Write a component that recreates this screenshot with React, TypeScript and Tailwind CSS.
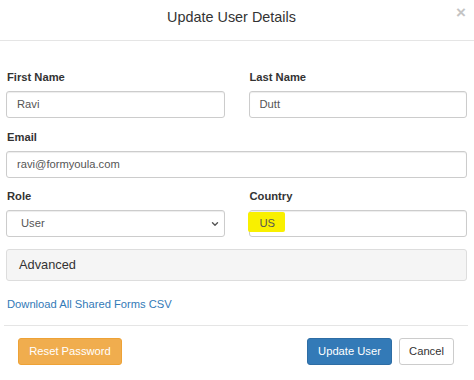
import React from "react";

function Field({ label, value, highlight }: { label: string; value: string; highlight?: boolean }) {
  return (
    <div className="flex flex-col">
      <div className="text-[11.2px] leading-[16px] font-bold text-[#333] mb-[6px] pl-[1px]">{label}</div>
      <div className="relative h-[27px] border border-[#ccc] rounded-[3px] shadow-[inset_0_1px_1px_rgba(0,0,0,0.075)] bg-white flex items-center pl-[10px] text-[11.2px] text-[#555]">
        {highlight && (
          <div className="absolute left-[-2px] top-[1px] w-[37px] h-[20px] bg-[#f9f000] rounded-[2px]" />
        )}
        <span className="relative">{value}</span>
      </div>
    </div>
  );
}

export default function App() {
  return (
    <div className="w-[474px] h-[380px] bg-white font-['Liberation_Sans',Arial,sans-serif] text-[#333] overflow-hidden">
      {/* Header */}
      <div className="relative h-[41px] border-b border-[#e5e5e5]">
        <div className="pt-[7px] pr-[11px] text-center text-[14.4px] leading-[20px] text-[#333]">
          Update User Details
        </div>
        <div className="absolute right-[8px] top-[3px] text-[17px] leading-[20px] font-bold text-[#c4c4c4]">×</div>
      </div>

      {/* Body */}
      <div className="px-[6px] pr-[7px] pt-[28px]">
        <div className="grid grid-cols-2 gap-x-[24px] mb-[10.5px]">
          <Field label="First Name" value="Ravi" />
          <Field label="Last Name" value="Dutt" />
        </div>
        <div className="mb-[10.5px]">
          <Field label="Email" value="ravi@formyoula.com" />
        </div>
        <div className="grid grid-cols-2 gap-x-[24px]">
          <div className="flex flex-col">
            <div className="text-[11.2px] leading-[16px] font-bold text-[#333] mb-[6px] pl-[1px]">Role</div>
            <div className="h-[27px] border border-[#ccc] rounded-[3px] shadow-[inset_0_1px_1px_rgba(0,0,0,0.075)] bg-white flex items-center justify-between pl-[14px] pr-[4px] text-[11.2px] text-[#555]">
              <span>User</span>
              <svg width="10" height="10" viewBox="0 0 10 10" className="mt-[1px]">
                <path d="M2.5 3.8 L5 6.2 L7.5 3.8" fill="none" stroke="#555" strokeWidth="1.4" strokeLinecap="round" strokeLinejoin="round" />
              </svg>
            </div>
          </div>
          <Field label="Country" value="US" highlight />
        </div>

        <div className="mt-[12px] h-[32px] bg-[#f5f5f5] border border-[#ddd] rounded-[3px] flex items-center pl-[12px] text-[12.8px] text-[#333]">
          Advanced
        </div>

        <div className="mt-[15px] text-[11.2px] leading-[16px] text-[#337ab7] pl-[1px]">
          Download All Shared Forms CSV
        </div>
      </div>

      {/* Footer */}
      <div className="mx-[4px] mr-[6px] mt-[13px] border-t border-[#e5e5e5]" />
      <div className="flex items-center justify-between pl-[18px] pr-[20px] pt-[12px]">
        <div className="w-[104px] h-[27px] rounded-[3px] bg-[#f0ad4e] border border-[#eea236] flex items-center justify-center text-[11.2px] text-white">
          Reset Password
        </div>
        <div className="flex gap-[7px]">
          <div className="w-[85px] h-[27px] rounded-[3px] bg-[#337ab7] border border-[#2e6da4] flex items-center justify-center text-[11.2px] text-white">
            Update User
          </div>
          <div className="w-[55px] h-[27px] rounded-[3px] bg-white border border-[#ccc] flex items-center justify-center text-[11.2px] text-[#333]">
            Cancel
          </div>
        </div>
      </div>
    </div>
  );
}
